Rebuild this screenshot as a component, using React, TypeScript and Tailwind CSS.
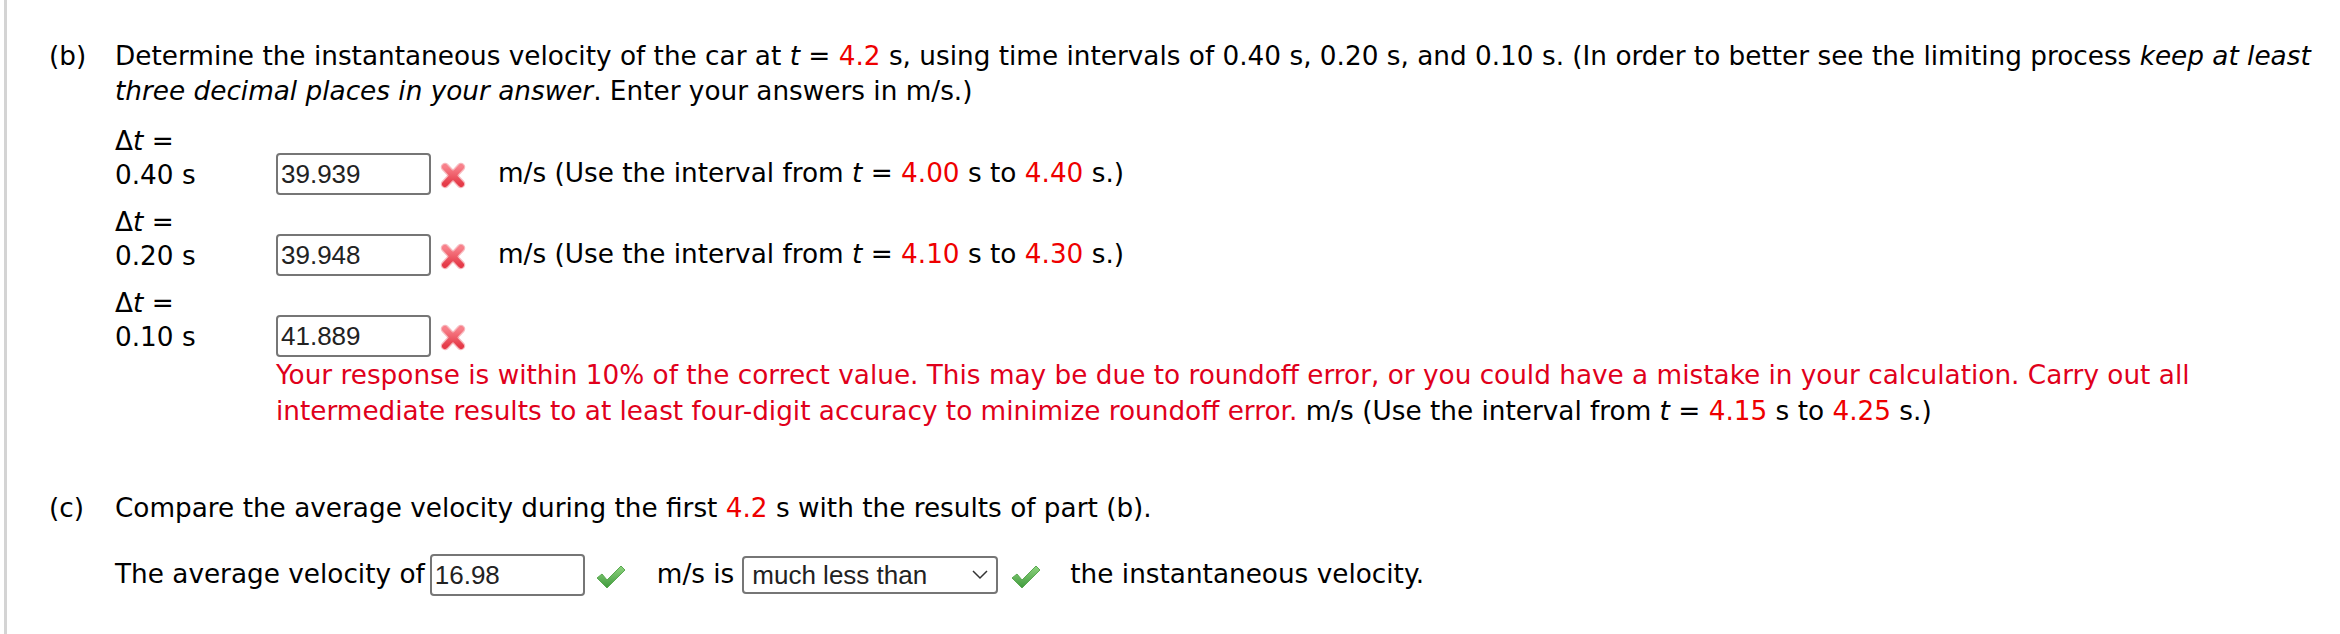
import React from "react";

const RED = "text-[#ee0000]";

function XIcon() {
  return (
    <svg width="28" height="30" viewBox="0 0 28 30" className="shrink-0">
      <defs>
        <linearGradient id="xg" x1="0" y1="0" x2="0" y2="1">
          <stop offset="0" stopColor="#f8808a" />
          <stop offset="1" stopColor="#e53a48" />
        </linearGradient>
      </defs>
      <g strokeLinecap="round">
        <line x1="6" y1="7" x2="22" y2="24" stroke="#ef6a75" strokeWidth="8.5" opacity="0.45" />
        <line x1="22" y1="7" x2="6" y2="24" stroke="#ef6a75" strokeWidth="8.5" opacity="0.45" />
        <line x1="6" y1="7" x2="22" y2="24" stroke="url(#xg)" strokeWidth="6" />
        <line x1="22" y1="7" x2="6" y2="24" stroke="url(#xg)" strokeWidth="6" />
      </g>
    </svg>
  );
}

function CheckIcon() {
  return (
    <svg width="32" height="28" viewBox="0 0 32 28" className="shrink-0">
      <defs>
        <linearGradient id="cg" x1="0" y1="0" x2="0" y2="1">
          <stop offset="0" stopColor="#8fd47f" />
          <stop offset="1" stopColor="#3f9a3d" />
        </linearGradient>
      </defs>
      <path
        d="M2 15 L7 11 L12 17 L26 3 L30 7 L12 25 Z"
        fill="url(#cg)"
        stroke="#5aa851"
        strokeWidth="1"
        strokeLinejoin="round"
      />
    </svg>
  );
}

function Box({ value }: { value: string }) {
  return (
    <div className="h-[42px] w-[155px] shrink-0 rounded-[4px] border-2 border-[#767676] bg-white pl-[3px] flex items-center text-[26px] text-[#222] [font-family:'Liberation_Sans',Arial,sans-serif]">
      {value}
    </div>
  );
}

function Row({
  label,
  value,
  from,
  to,
  children,
}: {
  label: string;
  value: string;
  from?: string;
  to?: string;
  children?: React.ReactNode;
}) {
  return (
    <div className="flex">
      <div className="w-[161px] shrink-0 leading-[34px]">
        <div>
          Δ<i>t</i> =
        </div>
        <div>{label}</div>
      </div>
      <div className="pt-[29px]">
        <div className="flex items-center">
          <Box value={value} />
          <div className="ml-[8px] mt-[2px]">
            <XIcon />
          </div>
          {from && (
            <span className="ml-[31px] whitespace-nowrap">
              m/s (Use the interval from <i>t</i> = <span className={RED}>{from}</span> s to{" "}
              <span className={RED}>{to}</span> s.)
            </span>
          )}
        </div>
        {children}
      </div>
    </div>
  );
}

export default function App() {
  return (
    <div className="w-[2340px] h-[634px] bg-white pl-[4px] text-black [font-family:'DejaVu_Sans',Verdana,sans-serif] text-[26.3px]">
      <div className="h-full border-l-[3px] border-[#d4d4d4] pl-[42px] pt-[39px]">
        {/* Part (b) */}
        <div className="flex">
          <div className="w-[66px] shrink-0 leading-[35px]">(b)</div>
          <div className="flex-1">
            <div className="leading-[35px] whitespace-nowrap">
              Determine the instantaneous velocity of the car at <i>t</i> ={" "}
              <span className={RED}>4.2</span> s, using time intervals of 0.40 s, 0.20 s, and 0.10 s. (In
              order to better see the limiting process <i>keep at least</i>
            </div>
            <div className="leading-[35px] whitespace-nowrap">
              <i>three decimal places in your answer</i>. Enter your answers in m/s.)
            </div>

            <div className="mt-[15px] flex flex-col gap-[10px]">
              <Row label="0.40 s" value="39.939" from="4.00" to="4.40" />
              <Row label="0.20 s" value="39.948" from="4.10" to="4.30" />
              <Row label="0.10 s" value="41.889">
                <div className="leading-[36px] whitespace-nowrap">
                  <span className="text-[#e0001b]">
                    Your response is within 10% of the correct value. This may be due to roundoff error, or you
                    could have a mistake in your calculation. Carry out all
                  </span>
                  <br />
                  <span className="text-[#e0001b]">
                    intermediate results to at least four-digit accuracy to minimize roundoff error.
                  </span>{" "}
                  m/s (Use the interval from <i>t</i> = <span className={RED}>4.15</span> s to{" "}
                  <span className={RED}>4.25</span> s.)
                </div>
              </Row>
            </div>
          </div>
        </div>

        {/* Part (c) */}
        <div className="mt-[61px] flex">
          <div className="w-[66px] shrink-0 leading-[36px]">(c)</div>
          <div className="flex-1">
            <div className="leading-[36px] whitespace-nowrap">
              Compare the average velocity during the first <span className={RED}>4.2</span> s with the results
              of part (b).
            </div>
            <div className="mt-[28px] flex items-center whitespace-nowrap">
              <span className="mr-[5px]">The average velocity of</span>
              <Box value="16.98" />
              <div className="ml-[10px] mt-[4px]">
                <CheckIcon />
              </div>
              <span className="ml-[30px]">m/s is</span>
              <div className="ml-[8px] h-[38px] w-[256px] rounded-[4px] border-2 border-[#767676] bg-white pl-[8px] pr-[8px] flex items-center justify-between text-[26px] text-[#222] [font-family:'Liberation_Sans',Arial,sans-serif]">
                <span>much less than</span>
                <svg width="16" height="10" viewBox="0 0 16 10">
                  <path d="M1 1 L8 8 L15 1" fill="none" stroke="#333" strokeWidth="1.5" />
                </svg>
              </div>
              <div className="ml-[12px] mt-[4px]">
                <CheckIcon />
              </div>
              <span className="ml-[28px]">the instantaneous velocity.</span>
            </div>
          </div>
        </div>
      </div>
    </div>
  );
}
